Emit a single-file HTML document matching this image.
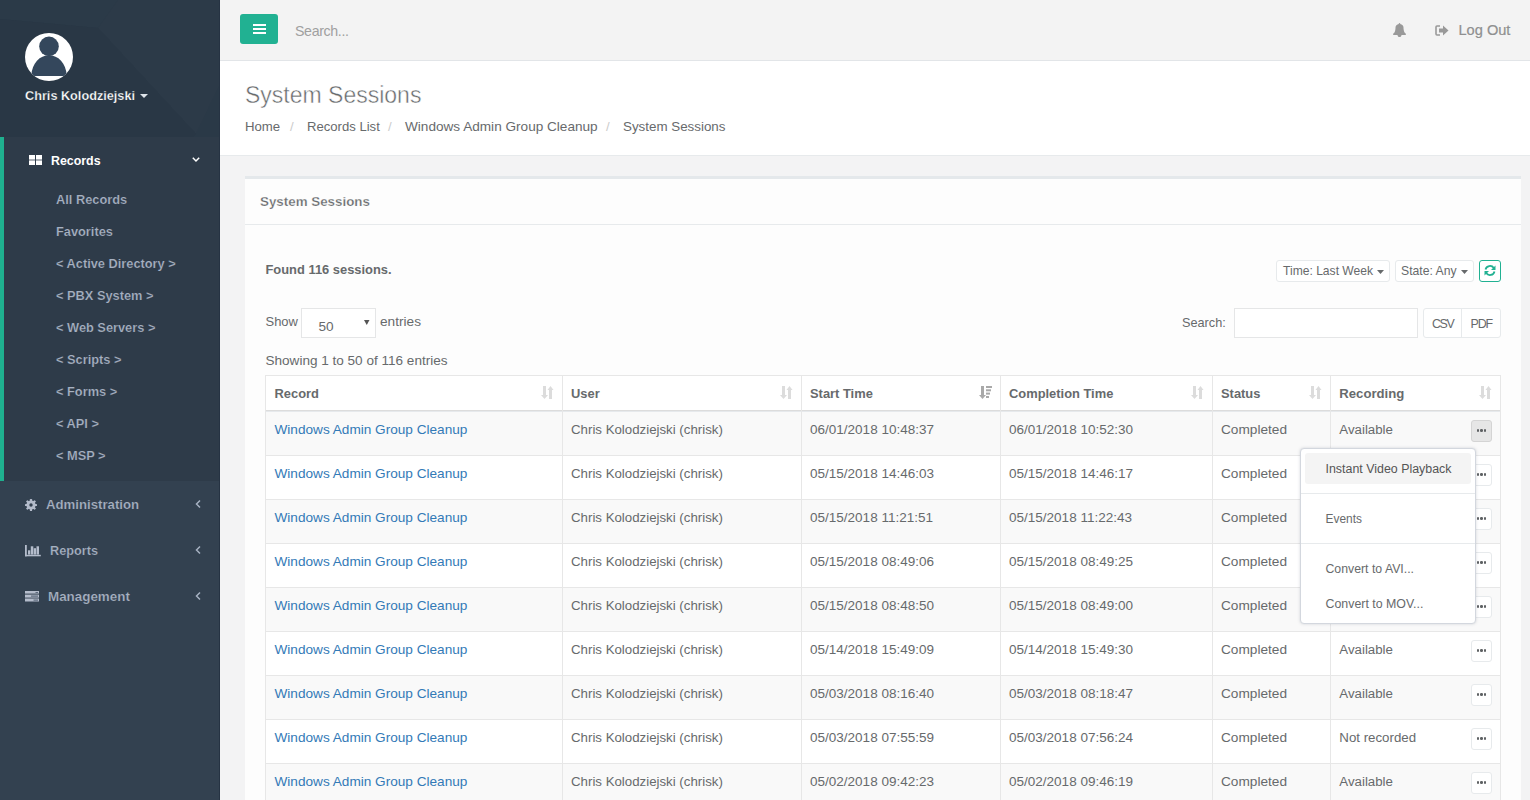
<!DOCTYPE html>
<html><head><meta charset="utf-8">
<style>
*{box-sizing:border-box;margin:0;padding:0}
html,body{width:1530px;height:800px;overflow:hidden;background:#f3f3f4;font-family:"Liberation Sans",sans-serif;color:#676a6c;font-size:13px}
.abs{position:absolute}
.t{position:absolute;white-space:nowrap}
svg{position:absolute;overflow:visible}
</style></head><body>
<div class="abs" style="left:0px;top:0px;width:220px;height:800px;background:#334150"></div>
<div class="abs" style="left:0px;top:0px;width:220px;height:137px;background:#2a3947"></div>
<svg style="left:0;top:0" width="220" height="137"><polygon points="0,0 118,0 98,28 0,19" fill="#2b3a48"/><polygon points="118,0 220,0 220,84 196,134 98,28" fill="#2c3a48"/><polygon points="0,19 98,28 196,134 193,137 0,137" fill="#293745"/></svg>
<div class="abs" style="left:0px;top:137px;width:220px;height:344px;background:#2e3b49"></div>
<div class="abs" style="left:0px;top:137px;width:4px;height:344px;background:#1fb08f"></div>
<div class="abs" style="left:219px;top:0px;width:1px;height:800px;background:#263343"></div>
<svg style="left:25px;top:33px" width="48" height="48" viewBox="0 0 48 48"><defs><clipPath id="cc"><circle cx="24" cy="24" r="24"/></clipPath></defs><circle cx="24" cy="24" r="24" fill="#fff"/><g clip-path="url(#cc)"><circle cx="24" cy="13.4" r="9.8" fill="#34475c"/><path d="M6.3,43 C6.8,30 15,22.3 24,22.3 C33,22.3 41.2,30 41.7,43 Z" fill="#34475c"/></g></svg>
<div class="t" style="left:25px;top:86px;font-size:12.7px;line-height:20px;color:#ffffff;font-weight:bold;-webkit-text-stroke:0.25px #2a3947">Chris Kolodziejski</div>
<svg style="left:140px;top:94px" width="9" height="5"><polygon points="0,0 8,0 4,4" fill="#dfe4ea"/></svg>
<svg style="left:29px;top:155px" width="13" height="10"><rect x="0" y="0" width="6" height="4.6" fill="#fff"/><rect x="7" y="0" width="6" height="4.6" fill="#fff"/><rect x="0" y="5.4" width="6" height="4.6" fill="#fff"/><rect x="7" y="5.4" width="6" height="4.6" fill="#fff"/></svg>
<div class="t" style="left:51px;top:151px;font-size:12.4px;line-height:20px;color:#ffffff;font-weight:bold;">Records</div>
<svg style="left:192px;top:157px" width="9" height="6"><polyline points="0.8,0.8 4,4 7.2,0.8" fill="none" stroke="#fff" stroke-width="1.5"/></svg>
<div class="t" style="left:56px;top:190px;font-size:12.8px;line-height:20px;color:#a7b1c2;font-weight:bold;-webkit-text-stroke:0.2px #2e3b49">All Records</div>
<div class="t" style="left:56px;top:222px;font-size:12.8px;line-height:20px;color:#a7b1c2;font-weight:bold;-webkit-text-stroke:0.2px #2e3b49">Favorites</div>
<div class="t" style="left:56px;top:254px;font-size:12.8px;line-height:20px;color:#a7b1c2;font-weight:bold;-webkit-text-stroke:0.2px #2e3b49">&lt; Active Directory &gt;</div>
<div class="t" style="left:56px;top:286px;font-size:12.8px;line-height:20px;color:#a7b1c2;font-weight:bold;-webkit-text-stroke:0.2px #2e3b49">&lt; PBX System &gt;</div>
<div class="t" style="left:56px;top:318px;font-size:12.8px;line-height:20px;color:#a7b1c2;font-weight:bold;-webkit-text-stroke:0.2px #2e3b49">&lt; Web Servers &gt;</div>
<div class="t" style="left:56px;top:350px;font-size:12.8px;line-height:20px;color:#a7b1c2;font-weight:bold;-webkit-text-stroke:0.2px #2e3b49">&lt; Scripts &gt;</div>
<div class="t" style="left:56px;top:382px;font-size:12.8px;line-height:20px;color:#a7b1c2;font-weight:bold;-webkit-text-stroke:0.2px #2e3b49">&lt; Forms &gt;</div>
<div class="t" style="left:56px;top:414px;font-size:12.8px;line-height:20px;color:#a7b1c2;font-weight:bold;-webkit-text-stroke:0.2px #2e3b49">&lt; API &gt;</div>
<div class="t" style="left:56px;top:446px;font-size:12.8px;line-height:20px;color:#a7b1c2;font-weight:bold;-webkit-text-stroke:0.2px #2e3b49">&lt; MSP &gt;</div>
<svg style="left:24.5px;top:498.5px" width="12" height="12" viewBox="0 0 12 12"><g fill="#b4bccb"><circle cx="6" cy="6" r="4.6"/><rect x="4.9" y="0" width="2.2" height="12" rx="0.6" transform="rotate(0 6 6)"/><rect x="4.9" y="0" width="2.2" height="12" rx="0.6" transform="rotate(45 6 6)"/><rect x="4.9" y="0" width="2.2" height="12" rx="0.6" transform="rotate(90 6 6)"/><rect x="4.9" y="0" width="2.2" height="12" rx="0.6" transform="rotate(135 6 6)"/></g><circle cx="6" cy="6" r="1.7" fill="#344150"/></svg>
<div class="t" style="left:46px;top:495px;font-size:13.2px;line-height:20px;color:#a7b1c2;font-weight:bold;-webkit-text-stroke:0.2px #344150">Administration</div>
<svg style="left:24.5px;top:544.7px" width="16" height="12" viewBox="0 0 16 12"><g fill="#b4bccb"><rect x="0" y="0" width="1.8" height="11.3"/><rect x="0" y="9.8" width="15.8" height="1.5"/><rect x="3" y="5.3" width="2.3" height="4.3"/><rect x="5.8" y="1.3" width="2.5" height="8.3"/><rect x="8.7" y="3.2" width="2.3" height="6.4"/><rect x="11.5" y="1.3" width="2.5" height="8.3"/></g></svg>
<div class="t" style="left:50px;top:541px;font-size:12.7px;line-height:20px;color:#a7b1c2;font-weight:bold;-webkit-text-stroke:0.2px #344150">Reports</div>
<svg style="left:24.5px;top:590.8px" width="14" height="11" viewBox="0 0 14 11"><g fill="#b4bccb"><rect x="0" y="0" width="14" height="2.6"/><rect x="0" y="3.6" width="14" height="3"/><rect x="0" y="7.5" width="14" height="3"/></g><g fill="#5c6a7d"><rect x="10.5" y="1" width="2.5" height="1"/><rect x="6" y="4.5" width="7" height="1.2"/><rect x="8.5" y="8.5" width="4.5" height="1.2"/></g></svg>
<div class="t" style="left:48px;top:587px;font-size:13.4px;line-height:20px;color:#a7b1c2;font-weight:bold;-webkit-text-stroke:0.2px #344150">Management</div>
<svg style="left:195px;top:499.5px" width="6" height="8"><polyline points="5,0.5 1.5,4 5,7.5" fill="none" stroke="#a7b1c2" stroke-width="1.5"/></svg>
<svg style="left:195px;top:545.5px" width="6" height="8"><polyline points="5,0.5 1.5,4 5,7.5" fill="none" stroke="#a7b1c2" stroke-width="1.5"/></svg>
<svg style="left:195px;top:591.5px" width="6" height="8"><polyline points="5,0.5 1.5,4 5,7.5" fill="none" stroke="#a7b1c2" stroke-width="1.5"/></svg>
<div class="abs" style="left:220px;top:0px;width:1310px;height:60px;background:#f3f3f3"></div>
<div class="abs" style="left:220px;top:60px;width:1310px;height:1px;background:#e2e5e8"></div>
<div class="abs" style="left:240px;top:14px;width:38px;height:30px;background:#21b192;border-radius:3px"></div>
<div class="abs" style="left:252.5px;top:24px;width:13px;height:2px;background:#fff"></div>
<div class="abs" style="left:252.5px;top:28px;width:13px;height:2px;background:#fff"></div>
<div class="abs" style="left:252.5px;top:32px;width:13px;height:2px;background:#fff"></div>
<div class="t" style="left:295px;top:21px;font-size:14.2px;line-height:20px;color:#a0a0a0;font-weight:normal;letter-spacing:-0.35px">Search...</div>
<svg style="left:1392.5px;top:23px" width="13" height="14" viewBox="0 0 1664 1792"><path d="M1664 1408q0 52-38 90t-90 38h-448q0 106-75 181t-181 75-181-75-75-181h-448q-52 0-90-38t-38-90q50-42 91-88t85-119.5 74.5-158.5 50-206 19.5-260q0-152 117-282.5t307-158.5q-8-19-8-39 0-40 28-68t68-28 68 28 28 68q0 20-8 39 190 28 307 158.5t117 282.5q0 139 19.5 260t50 206 74.5 158.5 85 119.5 91 88z" fill="#999"/></svg>
<svg style="left:1435px;top:25px" width="14" height="11" viewBox="0 0 14 11"><path d="M5,1 L2,1 Q1,1 1,2 L1,9 Q1,10 2,10 L5,10" fill="none" stroke="#999" stroke-width="1.6"/><path d="M4,3.5 L8,3.5 L8,0.5 L13.5,5.5 L8,10.5 L8,7.5 L4,7.5 Z" fill="#999"/></svg>
<div class="t" style="left:1458.5px;top:20px;font-size:14.6px;line-height:20px;color:#8f8f8f;font-weight:normal;-webkit-text-stroke:0.2px #8f8f8f">Log Out</div>
<div class="abs" style="left:220px;top:61px;width:1310px;height:94px;background:#fff"></div>
<div class="abs" style="left:220px;top:155px;width:1310px;height:1px;background:#e7eaec"></div>
<div class="t" style="left:245px;top:80px;font-size:23px;line-height:30px;color:#676a6c;font-weight:normal;-webkit-text-stroke:0.45px #fff">System Sessions</div>
<div class="t" style="left:245px;top:117px;font-size:13.2px;line-height:20px;color:#676a6c;font-weight:normal;">Home</div>
<div class="t" style="left:290px;top:117px;font-size:13.2px;line-height:20px;color:#cccccc;font-weight:normal;">/</div>
<div class="t" style="left:307px;top:117px;font-size:13.1px;line-height:20px;color:#676a6c;font-weight:normal;">Records List</div>
<div class="t" style="left:388px;top:117px;font-size:13.2px;line-height:20px;color:#cccccc;font-weight:normal;">/</div>
<div class="t" style="left:405px;top:117px;font-size:13.6px;line-height:20px;color:#676a6c;font-weight:normal;">Windows Admin Group Cleanup</div>
<div class="t" style="left:606px;top:117px;font-size:13.2px;line-height:20px;color:#cccccc;font-weight:normal;">/</div>
<div class="t" style="left:623px;top:117px;font-size:13.37px;line-height:20px;color:#676a6c;font-weight:normal;">System Sessions</div>
<div class="abs" style="left:245px;top:176px;width:1276px;height:3px;background:#e4e8eb"></div>
<div class="abs" style="left:245px;top:179px;width:1276px;height:45px;background:#fdfdfd"></div>
<div class="abs" style="left:245px;top:224px;width:1276px;height:1px;background:#e7eaec"></div>
<div class="abs" style="left:245px;top:225px;width:1276px;height:575px;background:#fdfdfd"></div>
<div class="t" style="left:260px;top:192px;font-size:13.37px;line-height:20px;color:#676a6c;font-weight:bold;-webkit-text-stroke:0.25px #fdfdfd">System Sessions</div>
<div class="t" style="left:265.5px;top:260px;font-size:12.9px;line-height:20px;color:#676a6c;font-weight:bold;">Found 116 sessions.</div>
<div class="abs" style="left:1276px;top:260px;width:114px;height:22px;border:1px solid #e7eaec;border-radius:3px;background:#fff"></div>
<div class="t" style="left:1283px;top:261px;font-size:12.1px;line-height:20px;color:#676a6c;font-weight:normal;">Time: Last Week</div>
<svg style="left:1377px;top:269.5px" width="8" height="5"><polygon points="0,0 7,0 3.5,4" fill="#676a6c"/></svg>
<div class="abs" style="left:1395px;top:260px;width:79px;height:22px;border:1px solid #e7eaec;border-radius:3px;background:#fff"></div>
<div class="t" style="left:1401px;top:261px;font-size:12.2px;line-height:20px;color:#676a6c;font-weight:normal;">State: Any</div>
<svg style="left:1460.5px;top:269.5px" width="8" height="5"><polygon points="0,0 7,0 3.5,4" fill="#676a6c"/></svg>
<div class="abs" style="left:1479px;top:260px;width:22px;height:22px;border:1px solid #21b192;border-radius:3px;background:#fff"></div>
<svg style="left:1484px;top:264.7px" width="12" height="11" viewBox="0 0 12 11"><path d="M1.5,4.5 A4.6,4.6 0 0 1 9.8,3" fill="none" stroke="#21b192" stroke-width="1.8"/><polygon points="11.5,0.5 11.5,5 7,5" fill="#21b192"/><path d="M10.5,6.5 A4.6,4.6 0 0 1 2.2,8" fill="none" stroke="#21b192" stroke-width="1.8"/><polygon points="0.5,10.5 0.5,6 5,6" fill="#21b192"/></svg>
<div class="t" style="left:265.5px;top:312px;font-size:12.95px;line-height:20px;color:#676a6c;font-weight:normal;">Show</div>
<div class="abs" style="left:301px;top:308px;width:75px;height:30px;border:1px solid #e5e6e7;background:#fff"></div>
<div class="t" style="left:318.5px;top:317px;font-size:13.6px;line-height:20px;color:#676a6c;font-weight:normal;">50</div>
<svg style="left:363.5px;top:320px" width="6" height="6"><polygon points="0,0 5.5,0 2.75,5" fill="#555"/></svg>
<div class="t" style="left:380px;top:312px;font-size:13.66px;line-height:20px;color:#676a6c;font-weight:normal;">entries</div>
<div class="t" style="left:1182px;top:313px;font-size:12.7px;line-height:20px;color:#676a6c;font-weight:normal;">Search:</div>
<div class="abs" style="left:1234px;top:308px;width:184px;height:30px;border:1px solid #e5e6e7;background:#fff"></div>
<div class="abs" style="left:1423px;top:308px;width:78px;height:30px;border:1px solid #e7eaec;border-radius:3px;background:#fff"></div>
<div class="abs" style="left:1461px;top:309px;width:1px;height:28px;background:#e7eaec"></div>
<div class="t" style="left:1432px;top:314px;font-size:12.4px;line-height:20px;color:#676a6c;font-weight:normal;letter-spacing:-1.4px">CSV</div>
<div class="t" style="left:1470.5px;top:314px;font-size:12.4px;line-height:20px;color:#676a6c;font-weight:normal;letter-spacing:-1.1px">PDF</div>
<div class="t" style="left:265.5px;top:351px;font-size:13.55px;line-height:20px;color:#676a6c;font-weight:normal;">Showing 1 to 50 of 116 entries</div>
<div class="abs" style="left:265px;top:375px;width:1236px;height:36px;background:#fff"></div>
<div class="abs" style="left:265px;top:411px;width:1236px;height:44px;background:#f9f9f9"></div>
<div class="abs" style="left:265px;top:455px;width:1236px;height:44px;background:#ffffff"></div>
<div class="abs" style="left:265px;top:499px;width:1236px;height:44px;background:#f9f9f9"></div>
<div class="abs" style="left:265px;top:543px;width:1236px;height:44px;background:#ffffff"></div>
<div class="abs" style="left:265px;top:587px;width:1236px;height:44px;background:#f9f9f9"></div>
<div class="abs" style="left:265px;top:631px;width:1236px;height:44px;background:#ffffff"></div>
<div class="abs" style="left:265px;top:675px;width:1236px;height:44px;background:#f9f9f9"></div>
<div class="abs" style="left:265px;top:719px;width:1236px;height:44px;background:#ffffff"></div>
<div class="abs" style="left:265px;top:763px;width:1236px;height:44px;background:#f9f9f9"></div>
<div class="abs" style="left:265px;top:455px;width:1236px;height:1px;background:#e7e7e7"></div>
<div class="abs" style="left:265px;top:499px;width:1236px;height:1px;background:#e7e7e7"></div>
<div class="abs" style="left:265px;top:543px;width:1236px;height:1px;background:#e7e7e7"></div>
<div class="abs" style="left:265px;top:587px;width:1236px;height:1px;background:#e7e7e7"></div>
<div class="abs" style="left:265px;top:631px;width:1236px;height:1px;background:#e7e7e7"></div>
<div class="abs" style="left:265px;top:675px;width:1236px;height:1px;background:#e7e7e7"></div>
<div class="abs" style="left:265px;top:719px;width:1236px;height:1px;background:#e7e7e7"></div>
<div class="abs" style="left:265px;top:763px;width:1236px;height:1px;background:#e7e7e7"></div>
<div class="abs" style="left:265px;top:807px;width:1236px;height:1px;background:#e7e7e7"></div>
<div class="abs" style="left:265px;top:375px;width:1236px;height:1px;background:#e7e7e7"></div>
<div class="abs" style="left:265px;top:410px;width:1236px;height:1px;background:#dcdcdc"></div>
<div class="abs" style="left:265px;top:411px;width:1236px;height:1px;background:#e6e9ec"></div>
<div class="abs" style="left:265px;top:375px;width:1px;height:425px;background:#e7e7e7"></div>
<div class="abs" style="left:562px;top:375px;width:1px;height:425px;background:#e7e7e7"></div>
<div class="abs" style="left:801px;top:375px;width:1px;height:425px;background:#e7e7e7"></div>
<div class="abs" style="left:1000px;top:375px;width:1px;height:425px;background:#e7e7e7"></div>
<div class="abs" style="left:1212px;top:375px;width:1px;height:425px;background:#e7e7e7"></div>
<div class="abs" style="left:1330px;top:375px;width:1px;height:425px;background:#e7e7e7"></div>
<div class="abs" style="left:1500px;top:375px;width:1px;height:425px;background:#e7e7e7"></div>
<div class="t" style="left:274.5px;top:384px;font-size:12.92px;line-height:20px;color:#676a6c;font-weight:bold;">Record</div>
<div class="t" style="left:571px;top:384px;font-size:12.9px;line-height:20px;color:#676a6c;font-weight:bold;">User</div>
<div class="t" style="left:810px;top:384px;font-size:12.9px;line-height:20px;color:#676a6c;font-weight:bold;">Start Time</div>
<div class="t" style="left:1009px;top:384px;font-size:12.9px;line-height:20px;color:#676a6c;font-weight:bold;">Completion Time</div>
<div class="t" style="left:1221px;top:384px;font-size:12.9px;line-height:20px;color:#676a6c;font-weight:bold;">Status</div>
<div class="t" style="left:1339.3px;top:384px;font-size:13.15px;line-height:20px;color:#676a6c;font-weight:bold;">Recording</div>
<svg style="left:541px;top:386px" width="14" height="13" viewBox="0 0 14 13"><g fill="#dcdcdc"><rect x="2" y="0" width="3" height="10"/><polygon points="0,9 7,9 3.5,13"/><rect x="8" y="3" width="3" height="10"/><polygon points="6.5,4 12.5,4 9.5,0"/></g></svg>
<svg style="left:780px;top:386px" width="14" height="13" viewBox="0 0 14 13"><g fill="#dcdcdc"><rect x="2" y="0" width="3" height="10"/><polygon points="0,9 7,9 3.5,13"/><rect x="8" y="3" width="3" height="10"/><polygon points="6.5,4 12.5,4 9.5,0"/></g></svg>
<svg style="left:979px;top:386px" width="14" height="13" viewBox="0 0 14 13"><g fill="#a9a9a9"><rect x="2" y="0" width="3" height="10"/><polygon points="0,9 7,9 3.5,13"/><rect x="7" y="0" width="6" height="2"/><rect x="7" y="3.3" width="5" height="2"/><rect x="7" y="6.6" width="4" height="2"/><rect x="7" y="10" width="3" height="2"/></g></svg>
<svg style="left:1191px;top:386px" width="14" height="13" viewBox="0 0 14 13"><g fill="#dcdcdc"><rect x="2" y="0" width="3" height="10"/><polygon points="0,9 7,9 3.5,13"/><rect x="8" y="3" width="3" height="10"/><polygon points="6.5,4 12.5,4 9.5,0"/></g></svg>
<svg style="left:1309px;top:386px" width="14" height="13" viewBox="0 0 14 13"><g fill="#dcdcdc"><rect x="2" y="0" width="3" height="10"/><polygon points="0,9 7,9 3.5,13"/><rect x="8" y="3" width="3" height="10"/><polygon points="6.5,4 12.5,4 9.5,0"/></g></svg>
<svg style="left:1479px;top:386px" width="14" height="13" viewBox="0 0 14 13"><g fill="#dcdcdc"><rect x="2" y="0" width="3" height="10"/><polygon points="0,9 7,9 3.5,13"/><rect x="8" y="3" width="3" height="10"/><polygon points="6.5,4 12.5,4 9.5,0"/></g></svg>
<div class="t" style="left:274.5px;top:420px;font-size:13.62px;line-height:20px;color:#337ab7;font-weight:normal;">Windows Admin Group Cleanup</div>
<div class="t" style="left:571px;top:420px;font-size:13.28px;line-height:20px;color:#676a6c;font-weight:normal;">Chris Kolodziejski (chrisk)</div>
<div class="t" style="left:810px;top:420px;font-size:13.52px;line-height:20px;color:#676a6c;font-weight:normal;">06/01/2018 10:48:37</div>
<div class="t" style="left:1009px;top:420px;font-size:13.52px;line-height:20px;color:#676a6c;font-weight:normal;">06/01/2018 10:52:30</div>
<div class="t" style="left:1221px;top:420px;font-size:13.65px;line-height:20px;color:#676a6c;font-weight:normal;">Completed</div>
<div class="t" style="left:1339.3px;top:420px;font-size:13.29px;line-height:20px;color:#676a6c;font-weight:normal;">Available</div>
<div class="abs" style="left:1471px;top:420px;width:21px;height:22px;background:#e6e6e6;border:1px solid #d4d4d4;border-radius:3px"></div>
<div class="abs" style="left:1476.6px;top:429px;width:2.6px;height:2.8px;background:#5f6264;border-radius:1.2px"></div>
<div class="abs" style="left:1480.1999999999998px;top:429px;width:2.6px;height:2.8px;background:#5f6264;border-radius:1.2px"></div>
<div class="abs" style="left:1483.8px;top:429px;width:2.6px;height:2.8px;background:#5f6264;border-radius:1.2px"></div>
<div class="t" style="left:274.5px;top:464px;font-size:13.62px;line-height:20px;color:#337ab7;font-weight:normal;">Windows Admin Group Cleanup</div>
<div class="t" style="left:571px;top:464px;font-size:13.28px;line-height:20px;color:#676a6c;font-weight:normal;">Chris Kolodziejski (chrisk)</div>
<div class="t" style="left:810px;top:464px;font-size:13.52px;line-height:20px;color:#676a6c;font-weight:normal;">05/15/2018 14:46:03</div>
<div class="t" style="left:1009px;top:464px;font-size:13.52px;line-height:20px;color:#676a6c;font-weight:normal;">05/15/2018 14:46:17</div>
<div class="t" style="left:1221px;top:464px;font-size:13.65px;line-height:20px;color:#676a6c;font-weight:normal;">Completed</div>
<div class="t" style="left:1339.3px;top:464px;font-size:13.29px;line-height:20px;color:#676a6c;font-weight:normal;">Available</div>
<div class="abs" style="left:1471px;top:464px;width:21px;height:22px;background:#fff;border:1px solid #e7eaec;border-radius:3px"></div>
<div class="abs" style="left:1476.6px;top:473px;width:2.6px;height:2.8px;background:#5f6264;border-radius:1.2px"></div>
<div class="abs" style="left:1480.1999999999998px;top:473px;width:2.6px;height:2.8px;background:#5f6264;border-radius:1.2px"></div>
<div class="abs" style="left:1483.8px;top:473px;width:2.6px;height:2.8px;background:#5f6264;border-radius:1.2px"></div>
<div class="t" style="left:274.5px;top:508px;font-size:13.62px;line-height:20px;color:#337ab7;font-weight:normal;">Windows Admin Group Cleanup</div>
<div class="t" style="left:571px;top:508px;font-size:13.28px;line-height:20px;color:#676a6c;font-weight:normal;">Chris Kolodziejski (chrisk)</div>
<div class="t" style="left:810px;top:508px;font-size:13.52px;line-height:20px;color:#676a6c;font-weight:normal;">05/15/2018 11:21:51</div>
<div class="t" style="left:1009px;top:508px;font-size:13.52px;line-height:20px;color:#676a6c;font-weight:normal;">05/15/2018 11:22:43</div>
<div class="t" style="left:1221px;top:508px;font-size:13.65px;line-height:20px;color:#676a6c;font-weight:normal;">Completed</div>
<div class="t" style="left:1339.3px;top:508px;font-size:13.29px;line-height:20px;color:#676a6c;font-weight:normal;">Available</div>
<div class="abs" style="left:1471px;top:508px;width:21px;height:22px;background:#fff;border:1px solid #e7eaec;border-radius:3px"></div>
<div class="abs" style="left:1476.6px;top:517px;width:2.6px;height:2.8px;background:#5f6264;border-radius:1.2px"></div>
<div class="abs" style="left:1480.1999999999998px;top:517px;width:2.6px;height:2.8px;background:#5f6264;border-radius:1.2px"></div>
<div class="abs" style="left:1483.8px;top:517px;width:2.6px;height:2.8px;background:#5f6264;border-radius:1.2px"></div>
<div class="t" style="left:274.5px;top:552px;font-size:13.62px;line-height:20px;color:#337ab7;font-weight:normal;">Windows Admin Group Cleanup</div>
<div class="t" style="left:571px;top:552px;font-size:13.28px;line-height:20px;color:#676a6c;font-weight:normal;">Chris Kolodziejski (chrisk)</div>
<div class="t" style="left:810px;top:552px;font-size:13.52px;line-height:20px;color:#676a6c;font-weight:normal;">05/15/2018 08:49:06</div>
<div class="t" style="left:1009px;top:552px;font-size:13.52px;line-height:20px;color:#676a6c;font-weight:normal;">05/15/2018 08:49:25</div>
<div class="t" style="left:1221px;top:552px;font-size:13.65px;line-height:20px;color:#676a6c;font-weight:normal;">Completed</div>
<div class="t" style="left:1339.3px;top:552px;font-size:13.29px;line-height:20px;color:#676a6c;font-weight:normal;">Available</div>
<div class="abs" style="left:1471px;top:552px;width:21px;height:22px;background:#fff;border:1px solid #e7eaec;border-radius:3px"></div>
<div class="abs" style="left:1476.6px;top:561px;width:2.6px;height:2.8px;background:#5f6264;border-radius:1.2px"></div>
<div class="abs" style="left:1480.1999999999998px;top:561px;width:2.6px;height:2.8px;background:#5f6264;border-radius:1.2px"></div>
<div class="abs" style="left:1483.8px;top:561px;width:2.6px;height:2.8px;background:#5f6264;border-radius:1.2px"></div>
<div class="t" style="left:274.5px;top:596px;font-size:13.62px;line-height:20px;color:#337ab7;font-weight:normal;">Windows Admin Group Cleanup</div>
<div class="t" style="left:571px;top:596px;font-size:13.28px;line-height:20px;color:#676a6c;font-weight:normal;">Chris Kolodziejski (chrisk)</div>
<div class="t" style="left:810px;top:596px;font-size:13.52px;line-height:20px;color:#676a6c;font-weight:normal;">05/15/2018 08:48:50</div>
<div class="t" style="left:1009px;top:596px;font-size:13.52px;line-height:20px;color:#676a6c;font-weight:normal;">05/15/2018 08:49:00</div>
<div class="t" style="left:1221px;top:596px;font-size:13.65px;line-height:20px;color:#676a6c;font-weight:normal;">Completed</div>
<div class="t" style="left:1339.3px;top:596px;font-size:13.29px;line-height:20px;color:#676a6c;font-weight:normal;">Available</div>
<div class="abs" style="left:1471px;top:596px;width:21px;height:22px;background:#fff;border:1px solid #e7eaec;border-radius:3px"></div>
<div class="abs" style="left:1476.6px;top:605px;width:2.6px;height:2.8px;background:#5f6264;border-radius:1.2px"></div>
<div class="abs" style="left:1480.1999999999998px;top:605px;width:2.6px;height:2.8px;background:#5f6264;border-radius:1.2px"></div>
<div class="abs" style="left:1483.8px;top:605px;width:2.6px;height:2.8px;background:#5f6264;border-radius:1.2px"></div>
<div class="t" style="left:274.5px;top:640px;font-size:13.62px;line-height:20px;color:#337ab7;font-weight:normal;">Windows Admin Group Cleanup</div>
<div class="t" style="left:571px;top:640px;font-size:13.28px;line-height:20px;color:#676a6c;font-weight:normal;">Chris Kolodziejski (chrisk)</div>
<div class="t" style="left:810px;top:640px;font-size:13.52px;line-height:20px;color:#676a6c;font-weight:normal;">05/14/2018 15:49:09</div>
<div class="t" style="left:1009px;top:640px;font-size:13.52px;line-height:20px;color:#676a6c;font-weight:normal;">05/14/2018 15:49:30</div>
<div class="t" style="left:1221px;top:640px;font-size:13.65px;line-height:20px;color:#676a6c;font-weight:normal;">Completed</div>
<div class="t" style="left:1339.3px;top:640px;font-size:13.29px;line-height:20px;color:#676a6c;font-weight:normal;">Available</div>
<div class="abs" style="left:1471px;top:640px;width:21px;height:22px;background:#fff;border:1px solid #e7eaec;border-radius:3px"></div>
<div class="abs" style="left:1476.6px;top:649px;width:2.6px;height:2.8px;background:#5f6264;border-radius:1.2px"></div>
<div class="abs" style="left:1480.1999999999998px;top:649px;width:2.6px;height:2.8px;background:#5f6264;border-radius:1.2px"></div>
<div class="abs" style="left:1483.8px;top:649px;width:2.6px;height:2.8px;background:#5f6264;border-radius:1.2px"></div>
<div class="t" style="left:274.5px;top:684px;font-size:13.62px;line-height:20px;color:#337ab7;font-weight:normal;">Windows Admin Group Cleanup</div>
<div class="t" style="left:571px;top:684px;font-size:13.28px;line-height:20px;color:#676a6c;font-weight:normal;">Chris Kolodziejski (chrisk)</div>
<div class="t" style="left:810px;top:684px;font-size:13.52px;line-height:20px;color:#676a6c;font-weight:normal;">05/03/2018 08:16:40</div>
<div class="t" style="left:1009px;top:684px;font-size:13.52px;line-height:20px;color:#676a6c;font-weight:normal;">05/03/2018 08:18:47</div>
<div class="t" style="left:1221px;top:684px;font-size:13.65px;line-height:20px;color:#676a6c;font-weight:normal;">Completed</div>
<div class="t" style="left:1339.3px;top:684px;font-size:13.29px;line-height:20px;color:#676a6c;font-weight:normal;">Available</div>
<div class="abs" style="left:1471px;top:684px;width:21px;height:22px;background:#fff;border:1px solid #e7eaec;border-radius:3px"></div>
<div class="abs" style="left:1476.6px;top:693px;width:2.6px;height:2.8px;background:#5f6264;border-radius:1.2px"></div>
<div class="abs" style="left:1480.1999999999998px;top:693px;width:2.6px;height:2.8px;background:#5f6264;border-radius:1.2px"></div>
<div class="abs" style="left:1483.8px;top:693px;width:2.6px;height:2.8px;background:#5f6264;border-radius:1.2px"></div>
<div class="t" style="left:274.5px;top:728px;font-size:13.62px;line-height:20px;color:#337ab7;font-weight:normal;">Windows Admin Group Cleanup</div>
<div class="t" style="left:571px;top:728px;font-size:13.28px;line-height:20px;color:#676a6c;font-weight:normal;">Chris Kolodziejski (chrisk)</div>
<div class="t" style="left:810px;top:728px;font-size:13.52px;line-height:20px;color:#676a6c;font-weight:normal;">05/03/2018 07:55:59</div>
<div class="t" style="left:1009px;top:728px;font-size:13.52px;line-height:20px;color:#676a6c;font-weight:normal;">05/03/2018 07:56:24</div>
<div class="t" style="left:1221px;top:728px;font-size:13.65px;line-height:20px;color:#676a6c;font-weight:normal;">Completed</div>
<div class="t" style="left:1339.3px;top:728px;font-size:13.29px;line-height:20px;color:#676a6c;font-weight:normal;">Not recorded</div>
<div class="abs" style="left:1471px;top:728px;width:21px;height:22px;background:#fff;border:1px solid #e7eaec;border-radius:3px"></div>
<div class="abs" style="left:1476.6px;top:737px;width:2.6px;height:2.8px;background:#5f6264;border-radius:1.2px"></div>
<div class="abs" style="left:1480.1999999999998px;top:737px;width:2.6px;height:2.8px;background:#5f6264;border-radius:1.2px"></div>
<div class="abs" style="left:1483.8px;top:737px;width:2.6px;height:2.8px;background:#5f6264;border-radius:1.2px"></div>
<div class="t" style="left:274.5px;top:772px;font-size:13.62px;line-height:20px;color:#337ab7;font-weight:normal;">Windows Admin Group Cleanup</div>
<div class="t" style="left:571px;top:772px;font-size:13.28px;line-height:20px;color:#676a6c;font-weight:normal;">Chris Kolodziejski (chrisk)</div>
<div class="t" style="left:810px;top:772px;font-size:13.52px;line-height:20px;color:#676a6c;font-weight:normal;">05/02/2018 09:42:23</div>
<div class="t" style="left:1009px;top:772px;font-size:13.52px;line-height:20px;color:#676a6c;font-weight:normal;">05/02/2018 09:46:19</div>
<div class="t" style="left:1221px;top:772px;font-size:13.65px;line-height:20px;color:#676a6c;font-weight:normal;">Completed</div>
<div class="t" style="left:1339.3px;top:772px;font-size:13.29px;line-height:20px;color:#676a6c;font-weight:normal;">Available</div>
<div class="abs" style="left:1471px;top:772px;width:21px;height:22px;background:#fff;border:1px solid #e7eaec;border-radius:3px"></div>
<div class="abs" style="left:1476.6px;top:781px;width:2.6px;height:2.8px;background:#5f6264;border-radius:1.2px"></div>
<div class="abs" style="left:1480.1999999999998px;top:781px;width:2.6px;height:2.8px;background:#5f6264;border-radius:1.2px"></div>
<div class="abs" style="left:1483.8px;top:781px;width:2.6px;height:2.8px;background:#5f6264;border-radius:1.2px"></div>
<div class="abs" style="left:1300px;top:448px;width:176px;height:176px;background:#fff;border:1px solid #d3d7de;border-radius:4px;box-shadow:0 0 3px rgba(86,96,117,0.25)"></div>
<div class="abs" style="left:1305px;top:453px;width:166px;height:31px;background:#f4f4f4;border-radius:3px"></div>
<div class="abs" style="left:1301px;top:493px;width:174px;height:1px;background:#e7eaec"></div>
<div class="abs" style="left:1301px;top:543px;width:174px;height:1px;background:#e7eaec"></div>
<div class="t" style="left:1325.5px;top:459px;font-size:12.41px;line-height:20px;color:#555555;font-weight:normal;">Instant Video Playback</div>
<div class="t" style="left:1325.5px;top:509px;font-size:11.91px;line-height:20px;color:#676a6c;font-weight:normal;">Events</div>
<div class="t" style="left:1325.5px;top:559px;font-size:12.29px;line-height:20px;color:#676a6c;font-weight:normal;">Convert to AVI...</div>
<div class="t" style="left:1325.5px;top:594px;font-size:12.39px;line-height:20px;color:#676a6c;font-weight:normal;">Convert to MOV...</div>
</body></html>
